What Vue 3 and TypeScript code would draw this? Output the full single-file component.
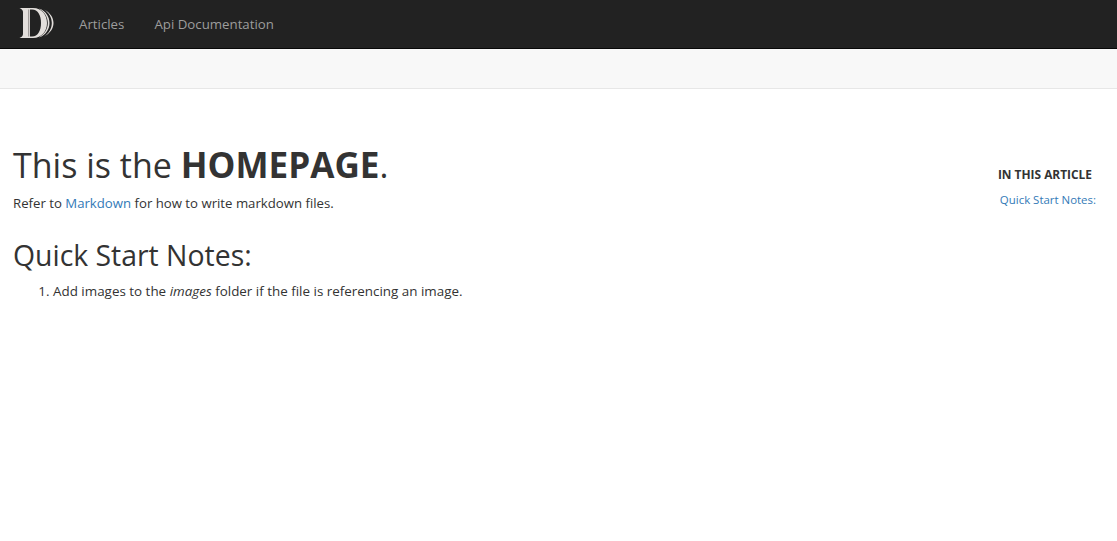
<script setup lang="ts">
const navItems: string[] = ['Articles', 'Api Documentation']
</script>

<template>
  <div class="page">
    <nav class="navbar">
      <svg class="logo" width="36" height="32" viewBox="0 1 36 32" aria-label="Logo">
        <path fill="#e3dfdc" fill-rule="evenodd" d="M0.500 1H14C23 1 28 8 28 16C28 24 23 31 14 31H0.500C2.500 30 4 29 4 27V5C4 3 2.500 2 0.500 1ZM11 2.500V29.500H13C19 29.500 22 23.500 22 16C22 8.500 19 2.500 13 2.500Z" />
        <path fill="#e3dfdc" d="M20 1.500C27 4 30.500 10 30.500 16C30.500 22 27 28 20 30.500C25.500 27 28.800 22 28.800 16C28.800 10 25.500 5 20 1.500Z" />
        <path fill="#e3dfdc" d="M25 2.500C31 5.500 34.500 10.500 34.500 16C34.500 21.500 31 26.500 25 29.500C30 26 32.800 21.500 32.800 16C32.800 10.500 30 6 25 2.500Z" />
        <rect x="9.200" y="2.500" width="1" height="27" fill="#8f8c8a" />
      </svg>
      <a v-for="item in navItems" :key="item" class="nav-link" href="#">{{ item }}</a>
    </nav>
    <div class="subbar"></div>
    <div class="body">
      <main class="article">
        <h1>This is the <strong>HOMEPAGE</strong>.</h1>
        <p>Refer to <a href="#">Markdown</a> for how to write markdown files.</p>
        <h2>Quick Start Notes:</h2>
        <ol>
          <li>Add images to the <em>images</em> folder if the file is referencing an image.</li>
        </ol>
      </main>
      <aside class="toc">
        <h5>IN THIS ARTICLE</h5>
        <a href="#">Quick Start Notes:</a>
      </aside>
    </div>
  </div>
</template>

<style>
html, body { margin: 0; background: #fff; }
</style>

<style scoped>
.page {
  font-family: "Open Sans", "Noto Sans", sans-serif;
  font-size: 13.2px;
  color: #333;
  min-height: 541px;
}
a { color: #337ab7; text-decoration: none; }
.navbar {
  display: flex;
  align-items: center;
  height: 48px;
  padding-left: 19px;
  background: #222;
  border-bottom: 1px solid #080808;
}
.logo { margin-right: 24px; flex: none; }
.nav-link { color: #9d9d9d; font-size: 13.28px; margin-right: 30px; }
.subbar {
  height: 39px;
  background: #f8f8f8;
  border-bottom: 1px solid #e7e7e7;
}
.body {
  display: flex;
  justify-content: space-between;
  padding: 53px 21px 0 13px;
}
h1 {
  margin: 0;
  font-size: 34px;
  font-weight: 400;
  line-height: 44px;
}
h1 strong { font-weight: 700; font-size: 35.1px; }
p { margin: 6px 0 0; line-height: 20px; }
h2 {
  margin: 24px 0 0;
  font-size: 28.4px;
  font-weight: 400;
  line-height: 36px;
}
ol { margin: 8px 0 0; padding-left: 40px; font-size: 13.42px; }
li { line-height: 20px; }
.toc { display: flex; flex-direction: column; align-items: flex-end; padding-top: 24px; }
.toc h5 {
  margin: 0 4px 0 0;
  font-size: 11.9px;
  font-weight: 700;
  line-height: 16px;
}
.toc a { margin-top: 10px; line-height: 16px; font-size: 11.45px; }
</style>
